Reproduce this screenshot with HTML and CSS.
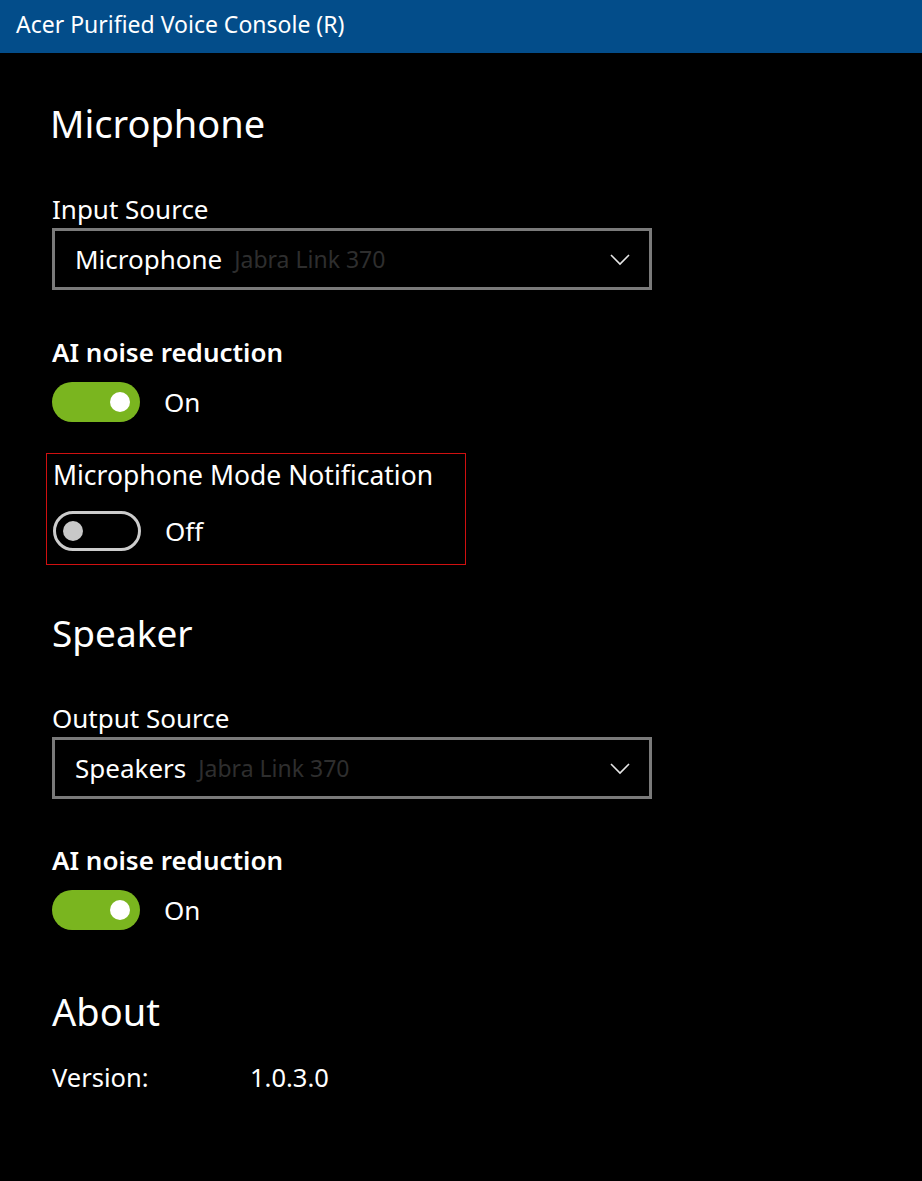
FILE: index.html
```html
<!DOCTYPE html>
<html lang="en" dir="ltr">
  <head>
    <meta charset="UTF-8" />
    <meta name="viewport" content="width=device-width, initial-scale=1.0" />
    <title>Acer Purified Voice Console (R)</title>
    <link rel="stylesheet" href="styles.css">
  </head>
  <body>
    <header class="title-bar">Acer Purified Voice Console (R)</header>

    <main class="console">
      <section class="group group-mic">
        <h2 class="group-title">Microphone</h2>

        <div class="field">
          <label class="field-label">Input Source</label>
          <div class="select">
            <span class="select-value">Microphone</span>
            <span class="select-device">Jabra Link 370</span>
            <svg class="select-chevron" width="20" height="12" viewBox="0 0 20 12">
              <path d="M1 1 L10 10 L19 1" fill="none" stroke="#e6e6e6" stroke-width="1.6" />
            </svg>
          </div>
        </div>

        <div class="setting">
          <div class="setting-name">AI noise reduction</div>
          <div class="switch-row">
            <span class="switch on"><span class="knob"></span></span>
            <span class="switch-text">On</span>
          </div>
        </div>

        <div class="setting-marked">
          <div class="setting-label">Microphone Mode Notification</div>
          <div class="switch-row">
            <span class="switch off"><span class="knob"></span></span>
            <span class="switch-text">Off</span>
          </div>
        </div>
      </section>

      <section class="group group-speaker">
        <h2 class="group-title">Speaker</h2>

        <div class="field">
          <label class="field-label">Output Source</label>
          <div class="select">
            <span class="select-value">Speakers</span>
            <span class="select-device">Jabra Link 370</span>
            <svg class="select-chevron" width="20" height="12" viewBox="0 0 20 12">
              <path d="M1 1 L10 10 L19 1" fill="none" stroke="#e6e6e6" stroke-width="1.6" />
            </svg>
          </div>
        </div>

        <div class="setting">
          <div class="setting-name">AI noise reduction</div>
          <div class="switch-row">
            <span class="switch on"><span class="knob"></span></span>
            <span class="switch-text">On</span>
          </div>
        </div>
      </section>

      <section class="group group-about">
        <h2 class="group-title">About</h2>
        <div class="about-row">
          <span class="about-key">Version:</span>
          <span class="about-value">1.0.3.0</span>
        </div>
      </section>
    </main>
  </body>
</html>
```

FILE: styles.css
```css
* {
  margin: 0;
  padding: 0;
  box-sizing: border-box;
}

body {
  font-family: 'Noto Sans', 'Open Sans', sans-serif;
  background: #000;
  color: #fff;
  width: 922px;
  min-height: 1181px;
}

.title-bar {
  height: 53px;
  background: #034d8a;
  color: #fff;
  font-size: 23px;
  line-height: 48px;
  padding-left: 16px;
}

.console {
  padding-left: 52px;
}

.group-title {
  font-size: 38px;
  font-weight: 400;
  line-height: 48px;
}

.group-mic .group-title {
  margin-top: 46px;
  margin-left: -2px;
}

.group-speaker .group-title {
  font-size: 37px;
  margin-top: 44px;
}

.group-about .group-title {
  margin-top: 57px;
}

.field {
  margin-top: 46px;
}

.group-speaker .field {
  margin-top: 45px;
}

.field-label {
  display: block;
  font-size: 26px;
  line-height: 32px;
}

.select {
  width: 600px;
  height: 62px;
  border: 3px solid #7a7a7a;
  display: flex;
  align-items: center;
  padding: 0 19px 0 20px;
  margin-top: 3px;
}

.select-value {
  font-size: 26px;
}

.select-device {
  font-size: 23px;
  color: #2e2e2e;
  margin-left: 12px;
  flex: 1;
}

.select-chevron {
  margin-top: 2px;
}

.setting {
  margin-top: 46px;
}

.group-speaker .setting {
  margin-top: 45px;
}

.setting-name {
  font-size: 26px;
  font-weight: 600;
  line-height: 32px;
}

.setting-label {
  font-size: 26.5px;
  line-height: 32px;
}

.switch-row {
  display: flex;
  align-items: center;
  gap: 24px;
  margin-top: 14px;
}

.switch {
  width: 88px;
  height: 40px;
  border-radius: 20px;
  display: flex;
  align-items: center;
}

.switch .knob {
  width: 20px;
  height: 20px;
  border-radius: 50%;
}

.switch.on {
  background: #7ab51f;
  justify-content: flex-end;
  padding-right: 10px;
}

.switch.on .knob {
  background: #fff;
}

.switch.off {
  border: 3px solid #cccccc;
  padding-left: 7px;
}

.switch.off .knob {
  background: #c8c8c8;
}

.switch-text {
  font-size: 26px;
}

.setting-marked {
  margin: 31px 0 0 -6px;
  width: 420px;
  height: 112px;
  border: 1px solid #d01010;
  padding: 5px 0 0 6px;
}

.setting-marked .switch-row {
  margin-top: 20px;
}

.about-row {
  display: flex;
  margin-top: 26px;
  font-size: 25.5px;
  line-height: 32px;
}

.about-key {
  width: 198px;
}
```
